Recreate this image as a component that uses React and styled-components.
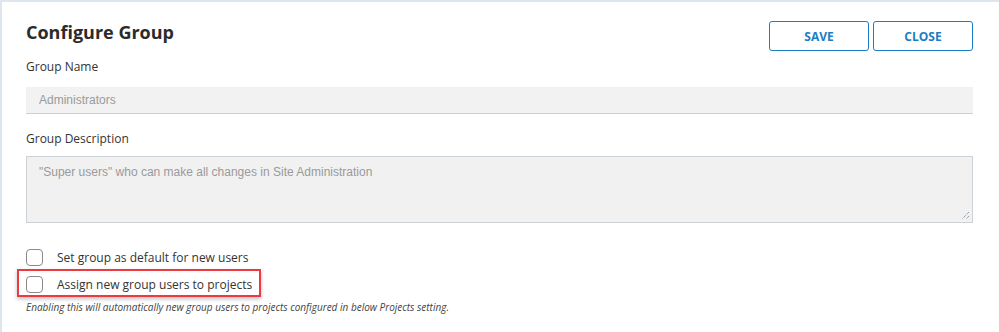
import React from 'react';
import styled, { createGlobalStyle } from 'styled-components';

const Global = createGlobalStyle`
  html, body { margin: 0; padding: 0; background: #fff; }
  body { font-family: "Open Sans", "Liberation Sans", sans-serif; color: #333; }
`;

const Page = styled.div`
  width: 999px;
  height: 332px;
  box-sizing: border-box;
  border-top: 2px solid #dfe5ec;
  border-left: 2px solid #dfe5ec;
  padding: 0 26px 0 24px;
  overflow: hidden;
`;

const Header = styled.div`
  display: flex;
  justify-content: space-between;
  align-items: flex-start;
  height: 56px;
`;

const Title = styled.h1`
  margin: 18px 0 0;
  font-size: 18px;
  line-height: 24px;
  font-weight: 700;
  color: #2b2b2b;
`;

const Buttons = styled.div`
  display: flex;
  gap: 4px;
  margin-top: 19px;
`;

const Button = styled.button`
  width: 100px;
  height: 30px;
  border: 1px solid #1b7dc4;
  border-radius: 3px;
  background: #fff;
  color: #1b7dc4;
  font-family: "Open Sans", sans-serif;
  font-weight: 700;
  font-size: 12px;
  padding: 0;
`;

const Label = styled.div`
  font-size: 12px;
  color: #333;
  line-height: 18px;
  margin-bottom: ${p => p.$gap}px;
`;

const Input = styled.div`
  height: 27px;
  box-sizing: border-box;
  background: #f2f2f2;
  border-bottom: 1px solid #c9d1da;
  display: flex;
  align-items: center;
  padding-left: 13px;
  font-family: "Liberation Sans", Arial, sans-serif;
  font-size: 12px;
  color: #9a9a9a;
  margin-bottom: 16px;
`;

const TextArea = styled.div`
  position: relative;
  height: 67px;
  background: #f1f1f1;
  border: 1px solid #cdd2d7;
  padding: 8px 12px;
  box-sizing: border-box;
  font-family: "Liberation Sans", Arial, sans-serif;
  font-size: 12px;
  color: #9a9a9a;
  margin-bottom: 25px;
`;

const Grip = styled.svg`
  position: absolute;
  right: 2px;
  bottom: 2px;
`;

const CheckRow = styled.label`
  display: flex;
  align-items: center;
  gap: 14px;
  font-size: 12px;
  color: #333;
  height: 18px;
  margin-bottom: ${p => p.$gap}px;
  position: relative;
`;

const Box = styled.span`
  width: 15px;
  height: 15px;
  border: 1px solid #8a8a8a;
  border-radius: 4px;
  background: #fff;
`;

const Highlight = styled.span`
  position: absolute;
  left: -9px;
  top: -6px;
  width: 240px;
  height: 24px;
  border: 2px solid #ec3a40;
  box-shadow: 0 2px 4px rgba(0,0,0,0.25);
`;

const Hint = styled.div`
  font-size: 10px;
  line-height: 14px;
  font-style: italic;
  color: #444;
  margin-top: 7px;
`;

export default function App() {
  return (
    <>
      <Global />
      <Page>
        <Header>
          <Title>Configure Group</Title>
          <Buttons>
            <Button>SAVE</Button>
            <Button>CLOSE</Button>
          </Buttons>
        </Header>
        <Label $gap={11}>Group Name</Label>
        <Input>Administrators</Input>
        <Label $gap={8}>Group Description</Label>
        <TextArea>
          "Super users" who can make all changes in Site Administration
          <Grip width="10" height="10" viewBox="0 0 10 10">
            <path d="M9 2 L2 9 M9 6 L6 9" stroke="#777" strokeWidth="1" strokeDasharray="1 1" />
          </Grip>
        </TextArea>
        <CheckRow $gap={9}>
          <Box />
          Set group as default for new users
        </CheckRow>
        <CheckRow $gap={0}>
          <Highlight />
          <Box />
          Assign new group users to projects
        </CheckRow>
        <Hint>Enabling this will automatically new group users to projects configured in below Projects setting.</Hint>
      </Page>
    </>
  );
}
